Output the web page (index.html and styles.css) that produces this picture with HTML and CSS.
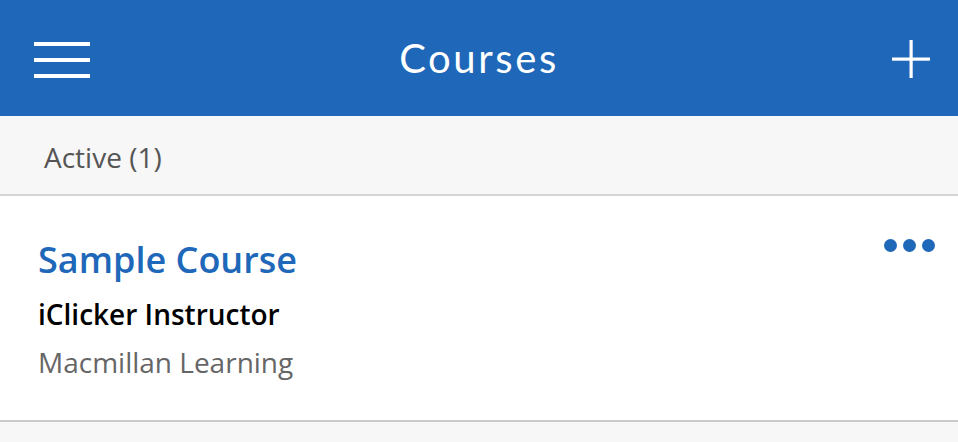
FILE: index.html
```html
<!DOCTYPE html>
<html>
<head>
<meta charset="utf-8">
<link rel="stylesheet" href="styles.css">
</head>
<body>
<header class="topbar">
  <button class="icon-btn menu" aria-label="Menu">
    <svg width="56" height="36" viewBox="0 0 56 36"><rect x="0" y="0" width="56" height="4" fill="#fff"/><rect x="0" y="16" width="56" height="4" fill="#fff"/><rect x="0" y="32" width="56" height="4" fill="#fff"/></svg>
  </button>
  <h1 class="title">Courses</h1>
  <button class="icon-btn add" aria-label="Add">
    <svg width="38" height="38" viewBox="0 0 38 38"><rect x="17.5" y="0" width="3.2" height="38" fill="#fff"/><rect x="0" y="17.5" width="38" height="3.2" fill="#fff"/></svg>
  </button>
</header>
<div class="section-head">Active (1)</div>
<div class="course">
  <div class="course-info">
    <div class="course-name">Sample Course</div>
    <div class="course-role">iClicker Instructor</div>
    <div class="course-org">Macmillan Learning</div>
  </div>
  <div class="more"><span></span><span></span><span></span></div>
</div>
<div class="rest"></div>
</body>
</html>
```
FILE: styles.css
```css
html, body { margin: 0; padding: 0; }
body { font-family: "Open Sans", "Liberation Sans", sans-serif; background: #f7f7f7; width: 958px; height: 442px; overflow: hidden; }
.topbar { height: 116px; background: #1e67b9; display: grid; grid-template-columns: 1fr auto 1fr; align-items: center; }
.icon-btn { background: none; border: 0; padding: 0; display: flex; }
.menu { justify-self: start; margin: 4px 0 0 34px; }
.title { margin: 0; color: #fff; font-family: "Lato", sans-serif; font-weight: 400; font-size: 40px; line-height: 40px; letter-spacing: 2.6px; }
.add { justify-self: end; margin: 2px 28px 0 0; }
.section-head { height: 80px; box-sizing: border-box; padding: 22px 0 0 44px; font-size: 28px; line-height: 38px; color: #555; border-bottom: 2px solid #d4d4d4; }
.course { background: #fff; display: flex; justify-content: space-between; padding: 36px 23px 0 38px; height: 226px; box-sizing: border-box; border-bottom: 2px solid #cacaca; }
.course-name { color: #1e67b9; font-weight: 600; font-size: 36px; line-height: 56px; }
.course-role { color: #000; font-weight: 600; font-size: 28px; line-height: 52px; }
.course-org { color: #666; font-size: 28px; line-height: 44px; }
.more { display: flex; gap: 6px; margin-top: 7px; }
.more span { width: 13px; height: 13px; border-radius: 50%; background: #1e67b9; }
```
